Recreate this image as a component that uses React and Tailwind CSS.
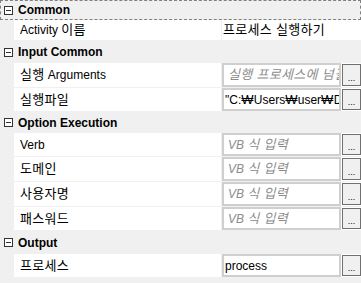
import React from 'react';

const font = { fontFamily: '"Liberation Sans", "Noto Sans CJK KR", sans-serif' };

// Hangul runs (and ₩) get a slightly bigger size, closer to Malgun Gothic's metrics
function Txt({ children }) {
  const parts = String(children).split(/([\uAC00-\uD7A3₩]+(?:\s+[\uAC00-\uD7A3₩]+)*)/);
  return (
    <span>
      {parts.map((p, i) =>
        /[\uAC00-\uD7A3₩]/.test(p) ? (
          <span key={i} className="text-[13px] tracking-[0.3px]">
            {p}
          </span>
        ) : (
          <React.Fragment key={i}>{p}</React.Fragment>
        )
      )}
    </span>
  );
}

const sections = [
  {
    title: 'Common',
    h: 'h-[20px]',
    focus: true,
    rows: [{ name: 'Activity 이름', text: '프로세스 실행하기', h: 'h-[21px]' }],
  },
  {
    title: 'Input Common',
    h: 'h-[22px]',
    rows: [
      { name: '실행 Arguments', placeholder: '실행 프로세스에 넘길 인수', h: 'h-[25px]' },
      { name: '실행파일', value: '"C:₩Users₩user₩Desktop₩test.exe"', h: 'h-[24px]' },
    ],
  },
  {
    title: 'Option Execution',
    h: 'h-[21px]',
    rows: [
      { name: 'Verb', placeholder: 'VB 식 입력', h: 'h-[24px]' },
      { name: '도메인', placeholder: 'VB 식 입력', h: 'h-[25px]' },
      { name: '사용자명', placeholder: 'VB 식 입력', h: 'h-[25px]' },
      { name: '패스워드', placeholder: 'VB 식 입력', h: 'h-[24px]' },
    ],
  },
  {
    title: 'Output',
    h: 'h-[23px]',
    rows: [{ name: '프로세스', value: 'process', h: 'h-[24px]' }],
  },
];

function Expander() {
  return (
    <span className="flex items-center justify-center w-[9px] h-[9px] border border-[#333] bg-white ml-[4px] mr-[5px]">
      <span className="block w-[5px] h-[1px] bg-[#333]" />
    </span>
  );
}

function Header({ title, h, focus }) {
  return (
    <div
      className={`flex items-center ${h} bg-[#f0f0f0] ${
        focus ? 'outline-1 outline-dashed outline-[#808080] -outline-offset-1' : ''
      }`}
    >
      <Expander />
      <span className="text-[12px] font-bold text-black">{title}</span>
    </div>
  );
}

function Row({ row }) {
  return (
    <div className={`flex ${row.h}`}>
      <div className="w-[14px] flex-none bg-[#f0f0f0]" />
      <div className="w-[208px] flex-none flex items-center pl-[6px] bg-white border-r border-b border-[#f0f0f0] text-[12px] text-black whitespace-nowrap">
        <Txt>{row.name}</Txt>
      </div>
      <div className="flex-1 min-w-0 flex bg-white border-b border-[#f0f0f0]">
        {row.text ? (
          <span className="flex items-center pl-[1px] text-[12px] text-black whitespace-nowrap">
            <Txt>{row.text}</Txt>
          </span>
        ) : (
          <>
            <div className="flex-1 min-w-0 flex items-center border-2 border-[#cfcfcf] bg-white pl-[4px] overflow-hidden">
              {row.placeholder ? (
                <span className="text-[12px] italic text-[#8c8c8c] whitespace-nowrap">
                  <Txt>{row.placeholder}</Txt>
                </span>
              ) : (
                <span className="text-[12px] text-black whitespace-nowrap -ml-[3px]">
                  <Txt>{row.value}</Txt>
                </span>
              )}
            </div>
            <div className="w-[19px] flex-none ml-[1px] my-[1px] flex items-end justify-center border border-[#707070] bg-[#f0f0f0] text-[9px] leading-[13px] text-black">
              ...
            </div>
          </>
        )}
      </div>
    </div>
  );
}

export default function App() {
  return (
    <div className="w-[361px] h-[283px] bg-[#f0f0f0] overflow-hidden select-none" style={font}>
      {sections.map((s) => (
        <div key={s.title}>
          <Header title={s.title} h={s.h} focus={s.focus} />
          {s.rows.map((r) => (
            <Row key={r.name} row={r} />
          ))}
        </div>
      ))}
    </div>
  );
}
